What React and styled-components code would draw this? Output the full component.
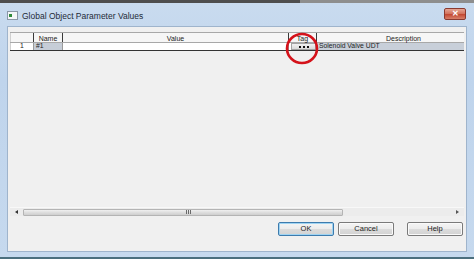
import React from "react";
import styled, { createGlobalStyle } from "styled-components";

const Global = createGlobalStyle`
  html, body { margin: 0; padding: 0; background: #c4d8ee; }
  body { font-family: "Liberation Sans", Arial, sans-serif; }
`;

const Root = styled.div`
  position: relative;
  width: 474px;
  height: 259px;
  overflow: hidden;
  display: flex;
  flex-direction: column;
`;

const TopStrip = styled.div`
  height: 3px;
  display: flex;
`;
const StripPart = styled.div`
  width: ${(p) => p.$w || "auto"};
  flex: ${(p) => (p.$w ? "none" : "1")};
  background: ${(p) => p.$c};
`;

const Frame = styled.div`
  flex: 1;
  display: flex;
  flex-direction: column;
  padding: 0 7px;
  background: linear-gradient(180deg, #c9dbef 0%, #bfd4ec 30%, #c6d9ee 100%);
`;

const TitleBar = styled.div`
  height: 23px;
  display: flex;
  align-items: center;
  padding-top: 2px;
  box-sizing: border-box;
`;

const AppIcon = styled.div`
  width: 9px;
  height: 7px;
  margin: 0 4px 0 0;
  background: #f4f6f8;
  border: 1px solid #8a97a6;
  position: relative;
  &::after {
    content: "";
    position: absolute;
    left: 1px;
    top: 2px;
    width: 3px;
    height: 3px;
    background: #2f8a3a;
  }
`;

const Title = styled.div`
  font-family: "Liberation Sans", Arial, sans-serif;
  font-size: 8.5px;
  color: #1e2a38;
  flex: 1;
`;

const CloseBtn = styled.div`
  width: 22px;
  height: 12px;
  margin-right: 1px;
  margin-top: -4px;
  border: 1px solid #8a3a30;
  border-radius: 2px;
  box-sizing: border-box;
  background: linear-gradient(180deg, #e6a594 0%, #d37560 45%, #c34a34 55%, #d8806a 100%);
  display: flex;
  align-items: center;
  justify-content: center;
  color: #fff;
  font-size: 8px;
  font-weight: bold;
  line-height: 1;
`;

const Client = styled.div`
  height: 226px;
  box-sizing: border-box;
  background: #f0f0f0;
  border: 1px solid #9fb4cc;
  padding: 5px 2px 0 2px;
  display: flex;
  flex-direction: column;
`;

const GridArea = styled.div`
  width: 454px;
  height: 184px;
  display: flex;
  flex-direction: column;
  overflow: hidden;
`;

const Row = styled.div`
  display: grid;
  grid-template-columns: 23px 29px 226px 28px 174px;
  height: ${(p) => p.$h}px;
  box-sizing: border-box;
  border-bottom: 1px solid ${(p) => p.$line};
  border-top: ${(p) => (p.$top ? "1px solid #a8a8a8" : "none")};
`;

const HeadCell = styled.div`
  background: #f6f6f6;
  border-left: ${(p) => (p.$dark ? "1px solid #3a3a3a" : "1px solid #d0d0d0")};
  font-size: 7px;
  color: #222;
  display: flex;
  align-items: center;
  justify-content: center;
  line-height: 1;
  padding-top: 1px;
  box-sizing: border-box;
`;

const Cell = styled.div`
  background: ${(p) => p.$bg || "#fff"};
  border-left: 1px solid ${(p) => p.$bl || "#c8c8c8"};
  font-size: 6.8px;
  color: #222;
  display: flex;
  align-items: center;
  justify-content: ${(p) => (p.$center ? "center" : "flex-start")};
  padding-left: ${(p) => (p.$center ? 0 : 2)}px;
  line-height: 1;
  box-sizing: border-box;
  white-space: nowrap;
  overflow: hidden;
`;

const DotsButton = styled.div`
  width: 100%;
  height: 100%;
  box-sizing: border-box;
  border: 1px solid #a4a4a4;
  background: linear-gradient(180deg, #f2f2f2 0%, #dadada 100%);
  display: flex;
  align-items: center;
  justify-content: center;
  gap: 2px;
`;

const Dot = styled.span`
  width: 2px;
  height: 2px;
  background: #111;
`;

const Filler = styled.div`
  flex: 1;
`;

const ScrollBar = styled.div`
  height: 8px;
  display: flex;
  align-items: center;
  background: #ececec;
  border-top: 1px solid #f8f8f8;
`;

const Arrow = styled.div`
  width: 13px;
  height: 8px;
  display: flex;
  align-items: center;
  justify-content: center;
  &::before {
    content: "";
    border-top: 2px solid transparent;
    border-bottom: 2px solid transparent;
    ${(p) => (p.$dir === "left" ? "border-right: 3px solid #333;" : "border-left: 3px solid #555;")}
  }
`;

const Track = styled.div`
  flex: 1;
  height: 8px;
  display: flex;
  align-items: center;
`;

const Thumb = styled.div`
  width: 320px;
  height: 7px;
  box-sizing: border-box;
  border: 1px solid #b4b4b4;
  border-radius: 1px;
  background: linear-gradient(180deg, #f0f0f0 0%, #dcdcdc 55%, #cfcfcf 100%);
  display: flex;
  align-items: center;
  justify-content: center;
`;

const Grip = styled.div`
  width: 5px;
  height: 4px;
  margin-left: 10px;
  background: repeating-linear-gradient(90deg, #6a6a6a 0 1px, transparent 1px 2px);
`;

const ButtonRow = styled.div`
  display: flex;
  justify-content: flex-end;
  margin-top: 6px;
  padding-right: 1px;
`;

const DlgButton = styled.div`
  width: 56px;
  height: 14px;
  box-sizing: border-box;
  margin-left: ${(p) => p.$gap}px;
  border: 1px solid ${(p) => (p.$default ? "#3d7bad" : "#7a7a7a")};
  border-radius: 2px;
  background: linear-gradient(180deg, #f4f4f4 0%, #ececec 50%, #dcdcdc 51%, #d2d2d2 100%);
  box-shadow: ${(p) => (p.$default ? "inset 0 0 0 1px #9fd4f3" : "inset 0 0 0 1px #fafafa")};
  display: flex;
  align-items: center;
  justify-content: center;
  font-size: 7.5px;
  color: #222;
  line-height: 1;
`;

const BottomFrame = styled.div`
  height: 5px;
`;

const BottomStrip = styled.div`
  height: 2px;
  background: #4b6f7e;
`;

const Circle = styled.svg`
  position: absolute;
  left: 285px;
  top: 32px;
  width: 34px;
  height: 33px;
  pointer-events: none;
`;

export default function App() {
  return (
    <>
      <Global />
      <Root>
        <TopStrip>
          <StripPart $w="300px" $c="#4e4e4e" />
          <StripPart $c="#8e8e8e" />
        </TopStrip>
        <Frame>
          <TitleBar>
            <AppIcon />
            <Title>Global Object Parameter Values</Title>
            <CloseBtn>✕</CloseBtn>
          </TitleBar>
          <Client>
            <GridArea>
              <Row $h={11} $line="#a8a8a8" $top>
                <HeadCell />
                <HeadCell $dark>Name</HeadCell>
                <HeadCell $dark>Value</HeadCell>
                <HeadCell $dark>Tag</HeadCell>
                <HeadCell $dark>Description</HeadCell>
              </Row>
              <Row $h={8} $line="#333">
                <Cell $center $bl="#d0d0d0">1</Cell>
                <Cell $bg="#c6cdd7" $bl="#9a9a9a">#1</Cell>
                <Cell $bl="#9a9a9a" />
                <Cell $bl="#9a9a9a">
                  <DotsButton>
                    <Dot />
                    <Dot />
                    <Dot />
                  </DotsButton>
                </Cell>
                <Cell $bg="#c8cfd9" $bl="#9a9a9a">Solenoid Valve UDT</Cell>
              </Row>
              <Filler />
              <ScrollBar>
                <Arrow $dir="left" />
                <Track>
                  <Thumb>
                    <Grip />
                  </Thumb>
                </Track>
                <Arrow $dir="right" />
              </ScrollBar>
            </GridArea>
            <ButtonRow>
              <DlgButton $default $gap={0}>OK</DlgButton>
              <DlgButton $gap={4}>Cancel</DlgButton>
              <DlgButton $gap={13}>Help</DlgButton>
            </ButtonRow>
          </Client>
          <BottomFrame />
        </Frame>
        <BottomStrip />
        <Circle viewBox="0 0 34 33">
          <ellipse cx="17" cy="16.5" rx="15" ry="14.5" fill="none" stroke="#d4121a" strokeWidth="2.6" />
        </Circle>
      </Root>
    </>
  );
}
